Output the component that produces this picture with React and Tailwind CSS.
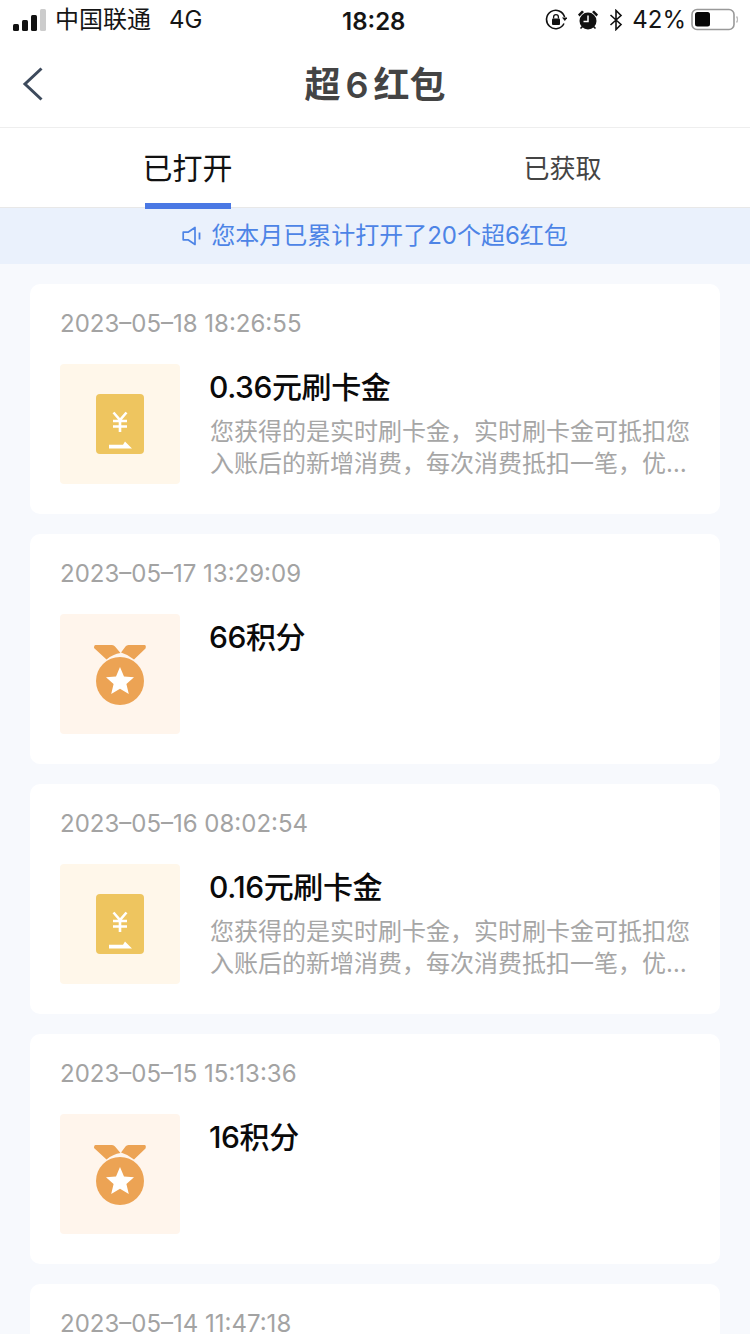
const FONT = "font-['Inter','Noto_Sans_CJK_SC',sans-serif]";

function Signal() {
  return (
    <svg width="34" height="22" viewBox="0 0 34 22" className="block">
      <rect x="0" y="15" width="6" height="7" rx="1.5" fill="#111" />
      <rect x="9" y="11" width="6" height="11" rx="1.5" fill="#111" />
      <rect x="18" y="6" width="6" height="16" rx="1.5" fill="#111" />
      <rect x="27" y="0" width="6" height="22" rx="1.5" fill="#ccc" />
    </svg>
  );
}

function RotationLock() {
  return (
    <svg width="22" height="22" viewBox="0 0 22 22" className="block">
      <path d="M19 14.5A9.2 9.2 0 1 1 19.6 8" fill="none" stroke="#111" strokeWidth="1.6" />
      <path d="M17 8.5h5.5l-2.7 3.5z" fill="#111" />
      <rect x="7" y="9.5" width="8" height="6.5" rx="1" fill="#111" />
      <path d="M8.6 9.5V8a2.4 2.4 0 0 1 4.8 0v1.5" fill="none" stroke="#111" strokeWidth="1.3" />
    </svg>
  );
}

function Alarm() {
  return (
    <svg width="22" height="22" viewBox="0 0 22 22" className="block">
      <circle cx="11" cy="12" r="8.5" fill="#111" />
      <path d="M1 5.5 5 1.5 7 3 2.5 7.5z M21 5.5 17 1.5 15 3 19.5 7.5z" fill="#111" />
      <path d="M3.5 19.5 5.5 17.5M18.5 19.5 16.5 17.5" stroke="#111" strokeWidth="1.6" />
      <path d="M11 6.5V12.5H6.5" fill="none" stroke="#fff" strokeWidth="1.5" />
    </svg>
  );
}

function Bluetooth() {
  return (
    <svg width="14" height="22" viewBox="0 0 14 22" className="block">
      <path d="M1.5 6 12 15.5 7 20.5V1.5L12 6.5 1.5 16" fill="none" stroke="#111" strokeWidth="1.6" />
    </svg>
  );
}

function Battery() {
  return (
    <svg width="47" height="24" viewBox="0 0 47 24" className="block">
      <rect x="1" y="1.5" width="42" height="20" rx="5" fill="none" stroke="#999" strokeWidth="1.6" />
      <rect x="4" y="4" width="15" height="14.5" rx="2.5" fill="#050505" />
      <path d="M45.5 8.5a5 5 0 0 1 0 6" fill="none" stroke="#bbb" strokeWidth="1.4" />
    </svg>
  );
}

function StatusBar() {
  return (
    <div className="relative h-10 flex items-center justify-between pl-[13px] pr-[12px] text-[24px] text-[#151515]">
      <div className="flex items-center">
        <Signal />
        <span className="ml-[8px]">中国联通</span>
        <span className="ml-[18px]">4G</span>
      </div>
      <span className="absolute left-[342px] top-[4px] font-semibold">18:28</span>
      <div className="flex items-center">
        <RotationLock />
        <span className="ml-[10px]"><Alarm /></span>
        <span className="ml-[10px]"><Bluetooth /></span>
        <span className="ml-[9px]">42%</span>
        <span className="ml-[5px]"><Battery /></span>
      </div>
    </div>
  );
}

function NavBar() {
  return (
    <div className="relative h-[88px] flex items-center justify-center border-b border-[#eeeeee]">
      <svg width="22" height="34" viewBox="0 0 22 34" className="absolute left-[22px] top-[27px]">
        <path d="M19.5 1.5 3 17 19.5 32.5" fill="none" stroke="#3d4a5c" strokeWidth="3" />
      </svg>
      <span className="text-[36px] font-semibold text-[#444444] pt-[2px] flex items-center">
        <span>超</span>
        <span className="mx-[5px]">6</span>
        <span>红包</span>
      </span>
    </div>
  );
}

function Tabs() {
  return (
    <div className="h-[80px] flex border-b border-[#e8e8e8]">
      <div className="flex-1 relative flex items-center justify-center">
        <span className="text-[30px] text-[#111111] pt-[2px]">已打开</span>
        <div className="absolute left-[145px] top-[75px] w-[86px] h-[6px] bg-[#4a78e4]" />
      </div>
      <div className="flex-1 flex items-center justify-center">
        <span className="text-[26px] text-[#444444] pt-[2px]">已获取</span>
      </div>
    </div>
  );
}

function Banner() {
  return (
    <div className="h-[56px] shrink-0 bg-[#eaf1fc] flex items-center justify-center text-[24px] text-[#4d84e6]">
      <svg width="20" height="20" viewBox="0 0 20 20" className="mr-[9px] shrink-0">
        <path d="M1.2 6.2H6L13 1.5V18.5L6 13.8H1.2z" fill="none" stroke="#4d84e6" strokeWidth="1.7" strokeLinejoin="round" />
        <path d="M17.5 6.5V13.5" stroke="#4d84e6" strokeWidth="1.8" />
      </svg>
      <span>您本月已累计打开了20个超6红包</span>
    </div>
  );
}

function CardIcon() {
  return (
    <div className="w-[120px] h-[120px] shrink-0 rounded-[4px] bg-[#fff7ea] flex items-center justify-center">
      <svg width="48" height="60" viewBox="0 0 48 60" className="block">
        <rect width="48" height="60" rx="4" fill="#eec55f" />
        <path d="M17.5 18.5 24 26 30.5 18.5M17 27H31M17 32.5H31M24 26V38" fill="none" stroke="#fff" strokeWidth="2.6" />
        <path d="M13 50.7H27L29 47.5 36 54.5H13z" fill="#fff" />
      </svg>
    </div>
  );
}

function MedalIcon() {
  return (
    <div className="w-[120px] h-[120px] shrink-0 rounded-[4px] bg-[#fff5ec] flex items-center justify-center">
      <svg width="54" height="60" viewBox="0 0 54 60" className="block mt-[1px]">
        <path d="M2.5 0H19Q21 0 22 1.5L27.5 8Q20 9 13.5 14.5L1 3Q1 0 2.5 0z" fill="#eca354" />
        <path d="M51.5 0H35.5Q33.5 0 32.5 1.5L28 7.5Q35 9.5 41 14.5L52.5 3.5Q53.5 0 51.5 0z" fill="#eca354" />
        <circle cx="27" cy="36" r="24" fill="#eca354" />
        <path d="M27 22 31 31.5 41 32.3 33.4 39 35.8 49 27 43.7 18.2 49 20.6 39 13 32.3 23 31.5z" fill="#fff" />
      </svg>
    </div>
  );
}

const DESC = "您获得的是实时刷卡金，实时刷卡金可抵扣您入账后的新增消费，每次消费抵扣一笔，优惠券抵扣后的金额";

function Card({ date, title, kind }) {
  return (
    <div className="h-[230px] shrink-0 rounded-[10px] bg-white px-[30px] pt-[24px]">
      <div className="text-[24px] leading-[32px] text-[#a3a3a3]">{date}</div>
      <div className="flex mt-[24px]">
        {kind === "card" ? <CardIcon /> : <MedalIcon />}
        <div className="ml-[30px] w-[480px]">
          <div className="text-[30px] leading-[48px] font-medium tracking-[-0.4px] text-[#0a0a0a] -mt-[1px] -ml-[1px]">{title}</div>
          {kind === "card" && (
            <div className="mt-[5px] text-[24px] leading-[32px] text-[#a6a6a6] line-clamp-2 break-all">{DESC}</div>
          )}
        </div>
      </div>
    </div>
  );
}

const ITEMS = [
  { date: "2023–05–18 18:26:55", title: "0.36元刷卡金", kind: "card" },
  { date: "2023–05–17 13:29:09", title: "66积分", kind: "medal" },
  { date: "2023–05–16 08:02:54", title: "0.16元刷卡金", kind: "card" },
  { date: "2023–05–15 15:13:36", title: "16积分", kind: "medal" },
  { date: "2023–05–14 11:47:18", title: "", kind: "medal" },
];

export default function App() {
  return (
    <div className={`${FONT} w-[750px] h-[1334px] overflow-hidden bg-[#f7f9fd] flex flex-col`}>
      <div className="bg-white shrink-0">
        <StatusBar />
        <NavBar />
        <Tabs />
      </div>
      <Banner />
      <div className="flex flex-col gap-[20px] px-[30px] pt-[20px]">
        {ITEMS.map((item) => (
          <Card key={item.date} {...item} />
        ))}
      </div>
    </div>
  );
}
